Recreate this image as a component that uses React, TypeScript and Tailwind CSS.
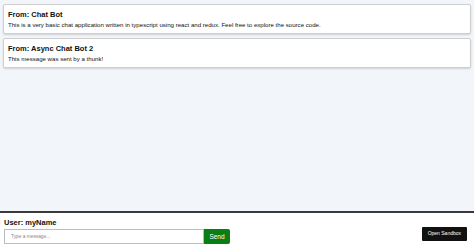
import { useState } from "react";

type Message = { user: string; message: string };

const initialMessages: Message[] = [
  {
    user: "Chat Bot",
    message:
      "This is a very basic chat application written in typescript using react and redux. Feel free to explore the source code.",
  },
  { user: "Async Chat Bot 2", message: "This message was sent by a thunk!" },
];

function ChatMessage({ msg }: { msg: Message }) {
  return (
    <div className="bg-white border border-[#cfcfcf] rounded-[2px] shadow-[0_1px_2px_rgba(0,0,0,0.15)] px-[4px] pt-[5px] pb-[4px]">
      <h3 className="text-[7.5px] font-bold leading-[10px] text-[#111]">From: {msg.user}</h3>
      <p className="text-[6.1px] leading-[8px] text-[#111] mt-[1px]">{msg.message}</p>
    </div>
  );
}

export default function App() {
  const [messages, setMessages] = useState<Message[]>(initialMessages);
  const [text, setText] = useState("");

  const send = () => {
    if (!text.trim()) return;
    setMessages((prev) => [...prev, { user: "myName", message: text }]);
    setText("");
  };

  return (
    <div className="h-screen flex flex-col font-['Liberation_Sans',Arial,sans-serif] relative">
      <div className="flex-1 bg-[#f2f5f9] px-[3px] pt-[4px] flex flex-col gap-[4px] overflow-hidden border-b-2 border-[#3a3a3a]">
        {messages.map((m, i) => (
          <ChatMessage key={i} msg={m} />
        ))}
      </div>
      <div className="h-[35px] bg-white px-[4px] pt-[5px]">
        <h3 className="text-[7.5px] font-bold leading-[10px] text-[#111]">User: myName</h3>
        <div className="flex mt-[1px]">
          <input
            value={text}
            onChange={(e) => setText(e.target.value)}
            placeholder="Type a message..."
            className="w-[200px] h-[15px] border border-[#bdbdbd] px-[6px] text-[4.8px] outline-none placeholder:text-[#888]"
          />
          <button
            onClick={send}
            className="w-[26px] h-[15px] bg-[#0a7d14] text-white text-[6.5px] rounded-r-[2px]"
          >
            Send
          </button>
        </div>
      </div>
      <button className="absolute right-[7px] bottom-[7px] h-[14px] px-[6px] bg-[#111] text-white text-[5px] rounded-[1px]">
        Open Sandbox
      </button>
    </div>
  );
}
